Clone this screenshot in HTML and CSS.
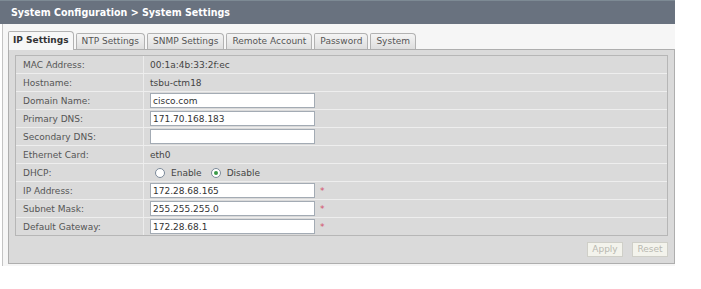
FILE: index.html
```html
<!DOCTYPE html>
<html>
<head>
<meta charset="utf-8">
<link rel="stylesheet" href="styles.css">
</head>
<body>
<div class="page">
  <div class="header">System Configuration &gt; System Settings</div>
  <div class="content">
    <div class="tabs">
      <div class="tab active">IP Settings</div>
      <div class="tab">NTP Settings</div>
      <div class="tab">SNMP Settings</div>
      <div class="tab">Remote Account</div>
      <div class="tab">Password</div>
      <div class="tab">System</div>
    </div>
    <div class="panel">
      <div class="table">
        <div class="row"><div class="label">MAC Address:</div><div class="value">00:1a:4b:33:2f:ec</div></div>
        <div class="row"><div class="label">Hostname:</div><div class="value">tsbu-ctm18</div></div>
        <div class="row"><div class="label">Domain Name:</div><div class="value"><input class="field" value="cisco.com"></div></div>
        <div class="row"><div class="label">Primary DNS:</div><div class="value"><input class="field" value="171.70.168.183"></div></div>
        <div class="row"><div class="label">Secondary DNS:</div><div class="value"><input class="field" value=""></div></div>
        <div class="row"><div class="label">Ethernet Card:</div><div class="value">eth0</div></div>
        <div class="row"><div class="label">DHCP:</div><div class="value">
          <span class="radio"></span><span class="rlabel">Enable</span>
          <span class="radio checked"></span><span class="rlabel">Disable</span>
        </div></div>
        <div class="row"><div class="label">IP Address:</div><div class="value"><input class="field" value="172.28.68.165"><span class="req">*</span></div></div>
        <div class="row"><div class="label">Subnet Mask:</div><div class="value"><input class="field" value="255.255.255.0"><span class="req">*</span></div></div>
        <div class="row"><div class="label">Default Gateway:</div><div class="value"><input class="field" value="172.28.68.1"><span class="req">*</span></div></div>
      </div>
      <div class="buttons">
        <button class="btn" disabled>Apply</button>
        <button class="btn" disabled>Reset</button>
      </div>
    </div>
  </div>
</div>
</body>
</html>
```
FILE: styles.css
```css
* { box-sizing: border-box; }
body {
  margin: 0;
  background: #ffffff;
  font-family: "DejaVu Sans", Verdana, sans-serif;
  font-size: 9px;
  color: #4a4a4a;
}
.page { width: 675px; }
.header {
  height: 24px;
  background: #69727f;
  border-top: 1px solid #7d8a94;
  color: #ffffff;
  font-family: "DejaVu Sans Condensed", "DejaVu Sans", sans-serif;
  font-weight: bold;
  font-size: 10.6px;
  line-height: 23px;
  padding-left: 11px;
}
.content {
  margin-left: 2px;
  border-left: 1px solid #c4c4c4;
  background: #f6f6f6;
  padding: 7px 0 2px 5px;
}
.tabs {
  display: flex;
  align-items: flex-end;
  gap: 2px;
  height: 18px;
  position: relative;
  z-index: 1;
}
.tab {
  height: 16px;
  padding: 0 5px;
  border: 1px solid #b2b2b2;
  border-bottom: none;
  border-radius: 2px 4px 0 0;
  background: linear-gradient(#f4f4f4, #dedede);
  color: #555;
  line-height: 15px;
  font-size: 9px;
  white-space: nowrap;
}
.tab.active {
  height: 19px;
  margin-bottom: -1px;
  background: #f7f7f7;
  color: #333;
  font-weight: bold;
  line-height: 17px;
  padding: 0 4px;
}
.panel {
  border: 1px solid #aeaeae;
  background: #dadada;
  padding: 5px 6px 6px 6px;
}
.table {
  border: 1px solid #b6b6b6;
}
.row {
  display: flex;
  height: 18px;
  border-top: 1px solid #eeeeee;
}
.row:first-child { border-top: none; height: 17px; }
.label {
  width: 128px;
  padding-left: 7px;
  border-right: 1px solid #ececec;
  display: flex;
  align-items: center;
  color: #555;
}
.value {
  flex: 1;
  padding-left: 6px;
  display: flex;
  align-items: center;
  color: #444;
}
.field {
  width: 165px;
  height: 15px;
  border: 1px solid #a3abb4;
  background: #fff;
  font-family: "DejaVu Sans", Verdana, sans-serif;
  font-size: 9px;
  color: #333;
  padding: 0 2px;
  margin: 0;
}
.req {
  color: #d4506a;
  margin-left: 5px;
  font-size: 9px;
}
.radio {
  width: 10px;
  height: 10px;
  border: 1px solid #7c8a9a;
  border-radius: 50%;
  background: #fff;
  margin-left: 5px;
  margin-right: 6px;
  position: relative;
}
.radio.checked::after {
  content: "";
  position: absolute;
  left: 2px;
  top: 2px;
  width: 4px;
  height: 4px;
  border-radius: 50%;
  background: #3a9a48;
}
.rlabel { margin-right: 4px; }
.buttons {
  display: flex;
  justify-content: flex-end;
  gap: 9px;
  padding-top: 6px;
}
.btn {
  width: 36px;
  height: 15px;
  padding: 0;
  border: 1px solid #cfcfc8;
  background: #f3f3ec;
  color: #b8b8b0;
  font-family: "DejaVu Sans", Verdana, sans-serif;
  font-size: 9px;
  line-height: 13px;
}
```
